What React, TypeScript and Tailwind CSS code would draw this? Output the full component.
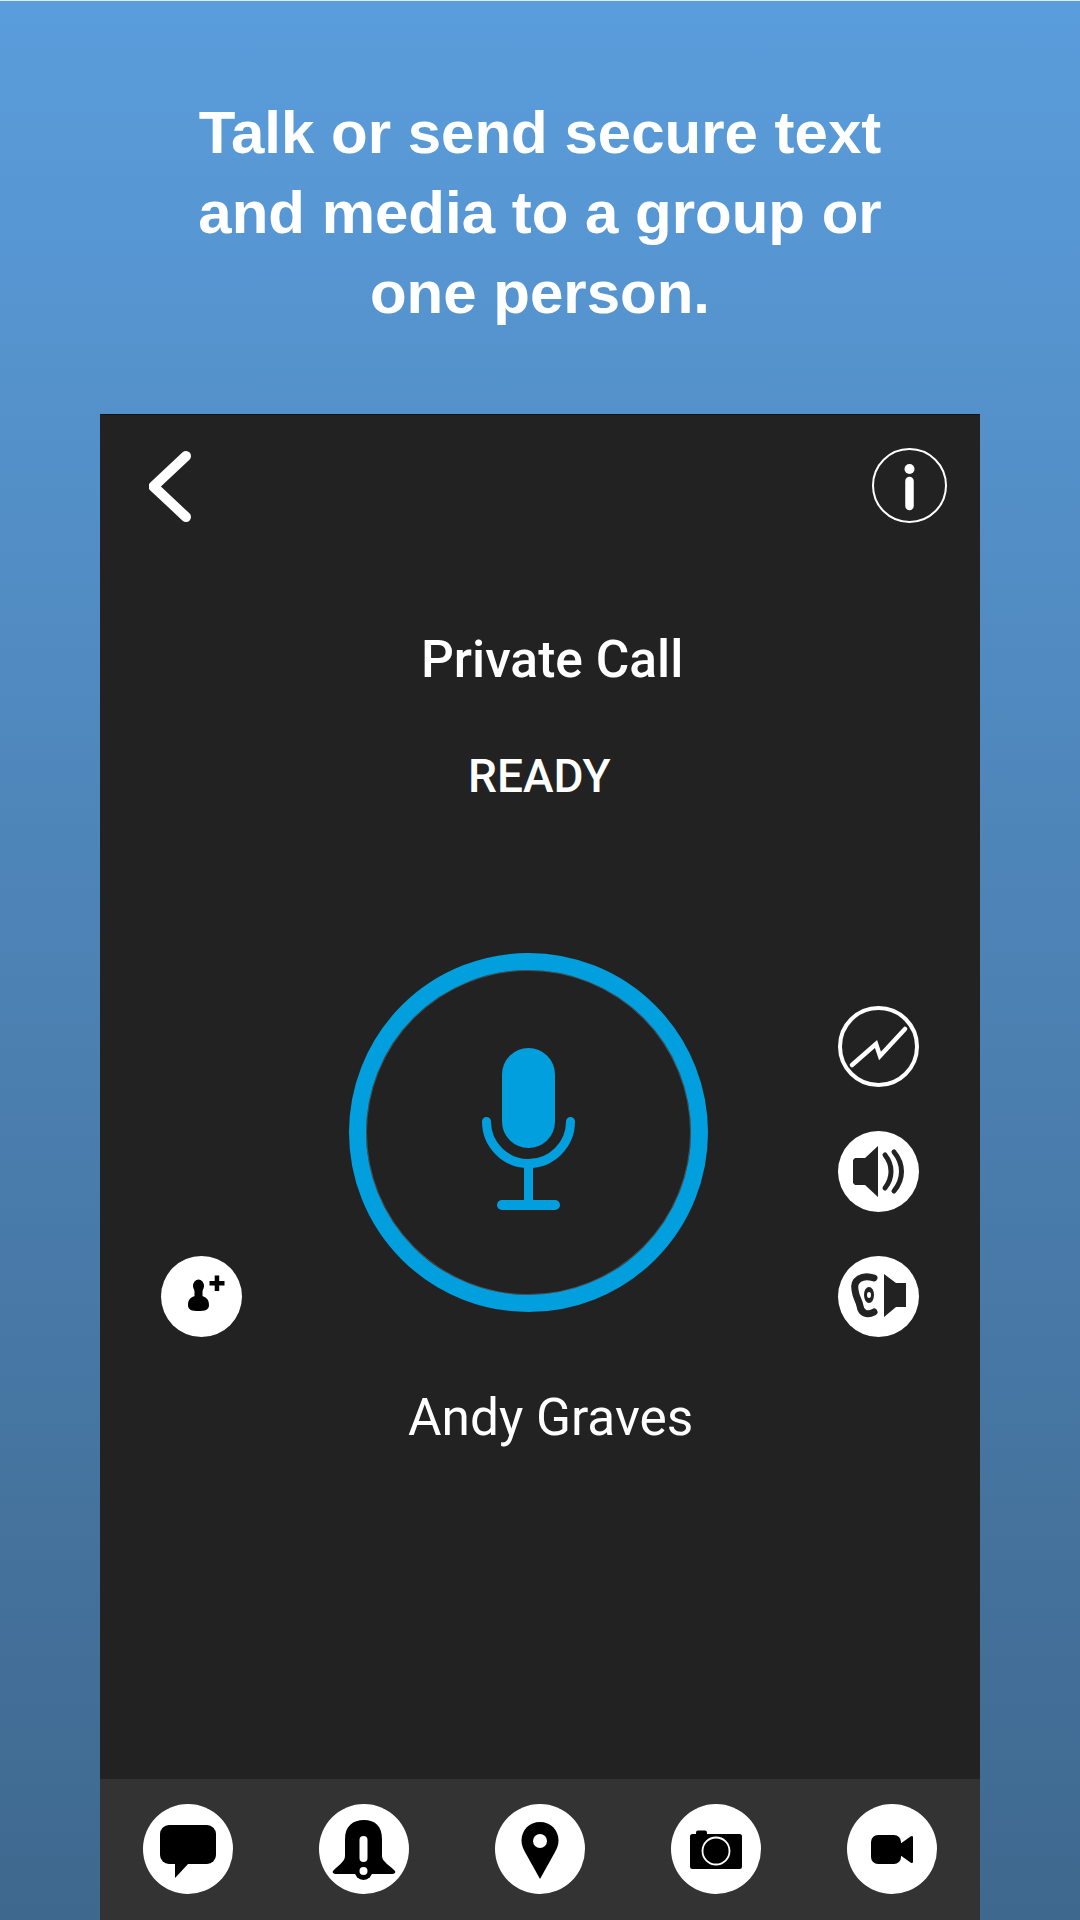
const roboto = "font-['Roboto',sans-serif]";

function Disc({ children, className = "" }: { children: React.ReactNode; className?: string }) {
  return <div className={`rounded-full bg-white shrink-0 ${className}`}>{children}</div>;
}

function Side({ children }: { children: React.ReactNode }) {
  return (
    <svg viewBox="0 0 81 81" className="block w-[81px] h-[81px]">
      {children}
    </svg>
  );
}

function Tab({ children }: { children: React.ReactNode }) {
  return (
    <div className="flex-1 flex justify-center pt-[25px]">
      <Disc className="w-[90px] h-[90px]">
        <svg viewBox="0 0 90 90" className="block w-[90px] h-[90px]">
          {children}
        </svg>
      </Disc>
    </div>
  );
}

export default function App() {
  return (
    <div className="w-[1080px] h-[1920px] flex flex-col items-center overflow-hidden border-t border-[#dfeaf6] bg-gradient-to-b from-[#5a9ddc] to-[#3f688e]">
      <h1 className="pt-[92px] text-center text-white font-bold text-[60px] leading-[80px] font-['Liberation_Sans',Arial,sans-serif]">
        Talk or send secure text
        <br />
        and media to a group or
        <br />
        one person.
      </h1>

      <div className="mt-[81px] w-[880px] flex-1 flex flex-col bg-[#222222] border-t border-[#111111]">
        <div className="flex-1 flex flex-col">
          <div className="flex items-start justify-between pt-[33px] pl-[49px] pr-[33px]">
            <svg viewBox="0 0 42 72" className="block w-[42px] h-[72px] mt-[3px]">
              <polyline points="37,5 4.5,35.5 37,66" fill="none" stroke="#fff" strokeWidth="10" strokeLinecap="round" strokeLinejoin="round" />
            </svg>
            <svg viewBox="0 0 75 75" className="block w-[75px] h-[75px]">
              <circle cx="37.5" cy="37.5" r="36.5" fill="none" stroke="#fff" strokeWidth="2" />
              <circle cx="37.5" cy="21" r="5" fill="#fff" />
              <line x1="37.5" y1="33" x2="37.5" y2="58" stroke="#fff" strokeWidth="8.5" strokeLinecap="round" />
            </svg>
          </div>

          <div className={`mt-[107px] pl-[321px] text-white text-[51.5px] leading-[60px] font-medium ${roboto}`}>Private Call</div>
          <div className={`mt-[56px] pl-[368px] text-white text-[46px] leading-[60px] font-medium ${roboto}`}>READY</div>

          <div className="mt-[147px] flex items-start pl-[61px]">
            <Disc className="mt-[303px]">
              <Side>
                <ellipse cx="37.5" cy="30" rx="5.5" ry="6.5" fill="#000" />
                <rect x="33.5" y="32" width="8" height="8" fill="#000" />
                <path d="M27 49 C27 42 31 41 37.5 38.5 C44 41 48 42 48 49 C48 54 44 55 37.5 55 C31 55 27 54 27 49 Z" fill="#000" />
                <rect x="48.5" y="25" width="15" height="4.5" fill="#000" />
                <rect x="53.7" y="19.5" width="4.5" height="15.5" fill="#000" />
              </Side>
            </Disc>

            <div className="ml-[107px] w-[359px] h-[359px] shrink-0 rounded-full border-[17px] border-[#019fdd] shadow-[inset_0_0_0_1px_#4d4d4d] flex items-center justify-center">
              <svg viewBox="0 0 93 162" className="block w-[93px] h-[162px] mb-[8px]">
                <rect x="20" y="0" width="53" height="100" rx="26.5" fill="#019fdd" />
                <path d="M4.5 73.5 A42 42 0 0 0 88.5 73.5" fill="none" stroke="#019fdd" strokeWidth="9" strokeLinecap="round" />
                <line x1="46.5" y1="115" x2="46.5" y2="157" stroke="#019fdd" strokeWidth="9" />
                <line x1="20" y1="157" x2="73" y2="157" stroke="#019fdd" strokeWidth="10" strokeLinecap="round" />
              </svg>
            </div>

            <div className="ml-[130px] mt-[53px] flex flex-col gap-[44px]">
              <Side>
                <circle cx="40.5" cy="40.5" r="38.5" fill="none" stroke="#fff" strokeWidth="4" />
                <polyline points="14,59 38,38 42,50 67,23" fill="none" stroke="#fff" strokeWidth="4.5" strokeLinecap="round" />
              </Side>
              <Disc>
                <Side>
                  <polygon points="15,29 17,27 27,27 40,15 40,66 27,54 17,54 15,52" fill="#222222" />
                  <path d="M47 24 C55 34 55 47 47 57" fill="none" stroke="#222222" strokeWidth="5" strokeLinecap="round" />
                  <path d="M56 21 C66 33 66 48 56 60" fill="none" stroke="#222222" strokeWidth="5" strokeLinecap="round" />
                </Side>
              </Disc>
              <Disc>
                <Side>
                  <polygon points="46,18 58,27 68,27 68,51 58,51 46,61" fill="#222222" />
                  <path d="M36 22 C24 18 15 24 17 34 C18 42 21 44 22 50 C23 57 29 60 36 56" fill="none" stroke="#222222" strokeWidth="7" strokeLinecap="round" />
                  <ellipse cx="31" cy="39" rx="5" ry="8" fill="#222222" />
                  <ellipse cx="31" cy="39" rx="2" ry="3" fill="#fff" />
                </Side>
              </Disc>
            </div>
          </div>

          <div className={`mt-[51px] pl-[308px] text-white text-[51.4px] leading-[60px] ${roboto}`}>Andy Graves</div>
        </div>

        <div className="h-[141px] bg-[#333333] flex">
          <Tab>
            <rect x="17" y="21" width="56" height="39" rx="9" fill="#000" />
            <polygon points="32,58 32,74 46,59" fill="#000" />
          </Tab>
          <Tab>
            <path d="M26 35 C26 22 34 16 45 16 C56 16 63 22 63 35 L63 52 C63 58 72 62 76 67 C77 69 75 70 73 70 L17 70 C15 70 13 69 14 67 C18 62 26 58 26 52 Z" fill="#000" />
            <circle cx="44.5" cy="67" r="9" fill="#000" />
            <circle cx="44.5" cy="67" r="4" fill="#fff" />
            <line x1="44.5" y1="36" x2="44.5" y2="54" stroke="#fff" strokeWidth="8" strokeLinecap="round" />
          </Tab>
          <Tab>
            <path d="M45 18 C55.5 18 63.5 26 63.5 36.5 C63.5 41 62 44.5 59.5 49 L45 75 L30.5 49 C28 44.5 26.5 41 26.5 36.5 C26.5 26 34.5 18 45 18 Z" fill="#000" />
            <circle cx="45" cy="37" r="7" fill="#fff" />
          </Tab>
          <Tab>
            <rect x="25" y="26.5" width="11" height="5" rx="2" fill="#000" />
            <rect x="19" y="30" width="52" height="35" rx="2.5" fill="#000" />
            <circle cx="45" cy="47" r="13.5" fill="#000" stroke="#fff" strokeWidth="1.8" />
          </Tab>
          <Tab>
            <rect x="24" y="31" width="30" height="29" rx="7" fill="#000" />
            <path d="M53 40 L63.5 32.5 C65 31.5 66 32 66 33.5 L66 57.5 C66 59 65 59.5 63.5 58.5 L53 51 Z" fill="#000" />
          </Tab>
        </div>
      </div>
    </div>
  );
}
